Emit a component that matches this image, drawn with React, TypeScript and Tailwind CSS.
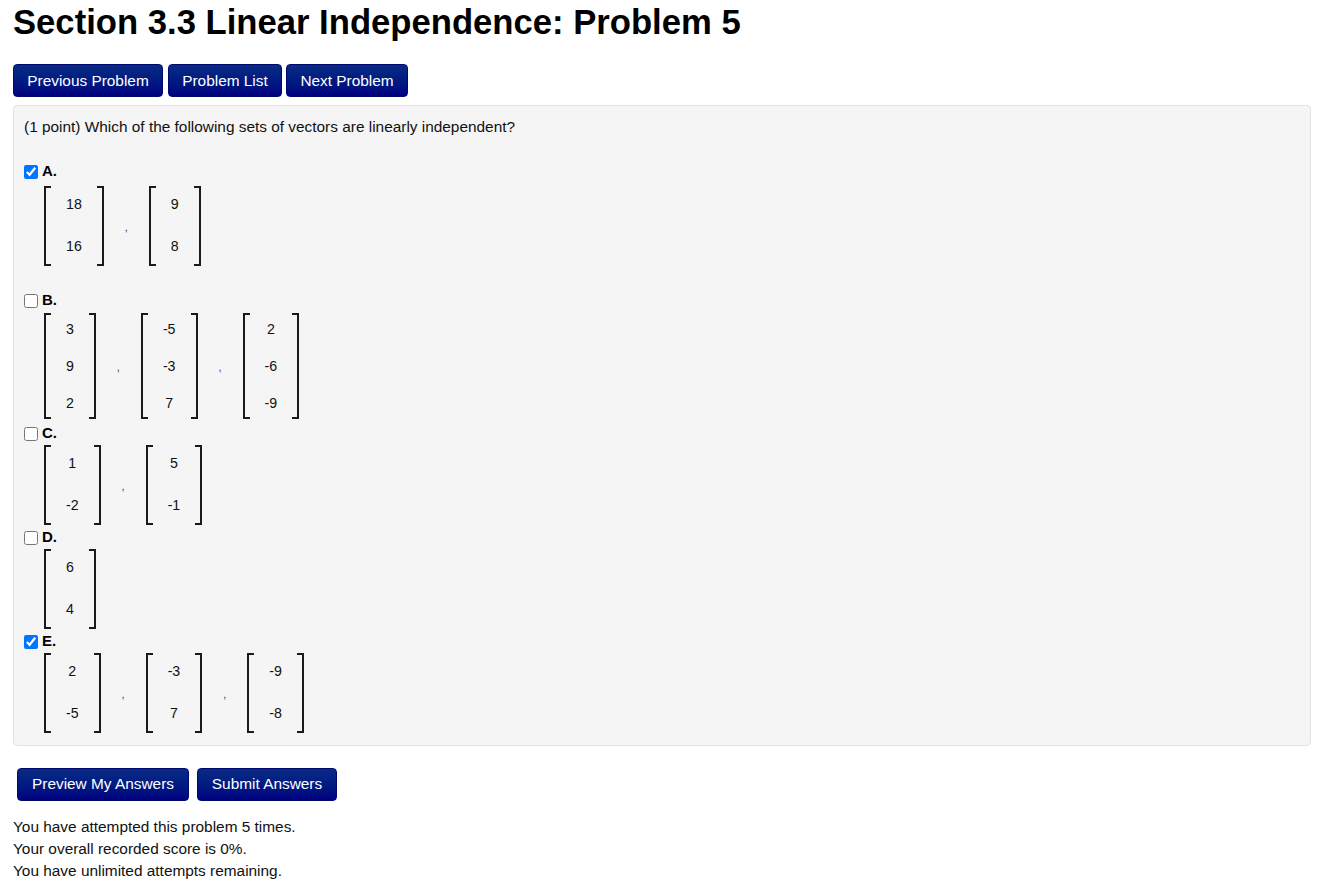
import React from 'react';

const btn =
  "h-[33px] rounded-[4px] border border-[#000a6e] bg-gradient-to-b from-[#0a2a84] to-[#00007f] text-white text-[15.4px] leading-none flex items-center justify-center";

function Matrix({ rows }: { rows: string[] }) {
  const tall = rows.length === 3;
  return (
    <div className={`relative flex flex-col items-center justify-center px-[22px] text-[14.2px] text-[#111] ${tall ? "h-[106px] gap-[21px]" : "h-[80px] gap-[26px] pb-[2px]"}`}>
      <div className="absolute left-0 top-0 bottom-0 w-[7px] border-l-2 border-t-2 border-b-2 border-[#1a1a1a]" />
      <div className="absolute right-0 top-0 bottom-0 w-[7px] border-r-2 border-t-2 border-b-2 border-[#1a1a1a]" />
      {rows.map((r, i) => (
        <span key={i} className="leading-[16px]">{r}</span>
      ))}
    </div>
  );
}

function Option({ label, checked, vectors, className, gapClass }: { label: string; checked?: boolean; vectors: string[][]; className: string; gapClass: string }) {
  return (
    <div className={className}>
      <div className="flex items-center h-[20px]">
        <input type="checkbox" defaultChecked={checked} className="w-[14px] h-[14px] m-0" />
        <b className="ml-[4px] pb-[2px] text-[15px] text-black">{label}</b>
      </div>
      <div className={`flex items-center ml-[20px] ${gapClass}`}>
        {vectors.map((v, i) => (
          <React.Fragment key={i}>
            {i > 0 && <span className="w-[45px] text-center text-[11px] leading-none text-[#333] relative top-[1px]">,</span>}
            <Matrix rows={v} />
          </React.Fragment>
        ))}
      </div>
    </div>
  );
}

export default function App() {
  return (
    <div className="bg-white h-[890px] overflow-hidden pl-[13px] pr-[18px] text-black font-['Liberation_Sans',Arial,sans-serif]">
      <h1 className="text-[34.65px] font-bold leading-[44px]">Section 3.3 Linear Independence: Problem 5</h1>
      <div className="flex gap-[4px] mt-[20px]">
        <button className={`${btn} w-[150px] mr-[1px]`}>Previous Problem</button>
        <button className={`${btn} w-[114px]`}>Problem List</button>
        <button className={`${btn} w-[122px]`}>Next Problem</button>
      </div>
      <div className="mt-[8px] bg-[#f5f5f5] border border-[#e3e3e3] rounded-[4px] pl-[10px] pt-[11px] pb-[12px]">
        <p className="text-[15.4px] leading-[20px] text-[#111]">(1 point) Which of the following sets of vectors are linearly independent?</p>
        <Option className="mt-[25px]" gapClass="mt-[4px]" label="A." checked vectors={[["18", "16"], ["9", "8"]]} />
        <Option className="mt-[25px]" gapClass="mt-[2px]" label="B." vectors={[["3", "9", "2"], ["-5", "-3", "7"], ["2", "-6", "-9"]]} />
        <Option className="mt-[5px]" gapClass="mt-[1px]" label="C." vectors={[["1", "-2"], ["5", "-1"]]} />
        <Option className="mt-[3px]" gapClass="mt-[1px]" label="D." vectors={[["6", "4"]]} />
        <Option className="mt-[3px]" gapClass="mt-[1px]" label="E." checked vectors={[["2", "-5"], ["-3", "7"], ["-9", "-8"]]} />
      </div>
      <div className="flex gap-[8px] mt-[22px] ml-[4px]">
        <button className={`${btn} w-[172px] pb-[1px]`}>Preview My Answers</button>
        <button className={`${btn} w-[140px] pb-[1px]`}>Submit Answers</button>
      </div>
      <div className="mt-[15px] text-[15.4px] leading-[22px] text-[#111]">
        <p>You have attempted this problem 5 times.</p>
        <p>Your overall recorded score is 0%.</p>
        <p>You have unlimited attempts remaining.</p>
      </div>
    </div>
  );
}
